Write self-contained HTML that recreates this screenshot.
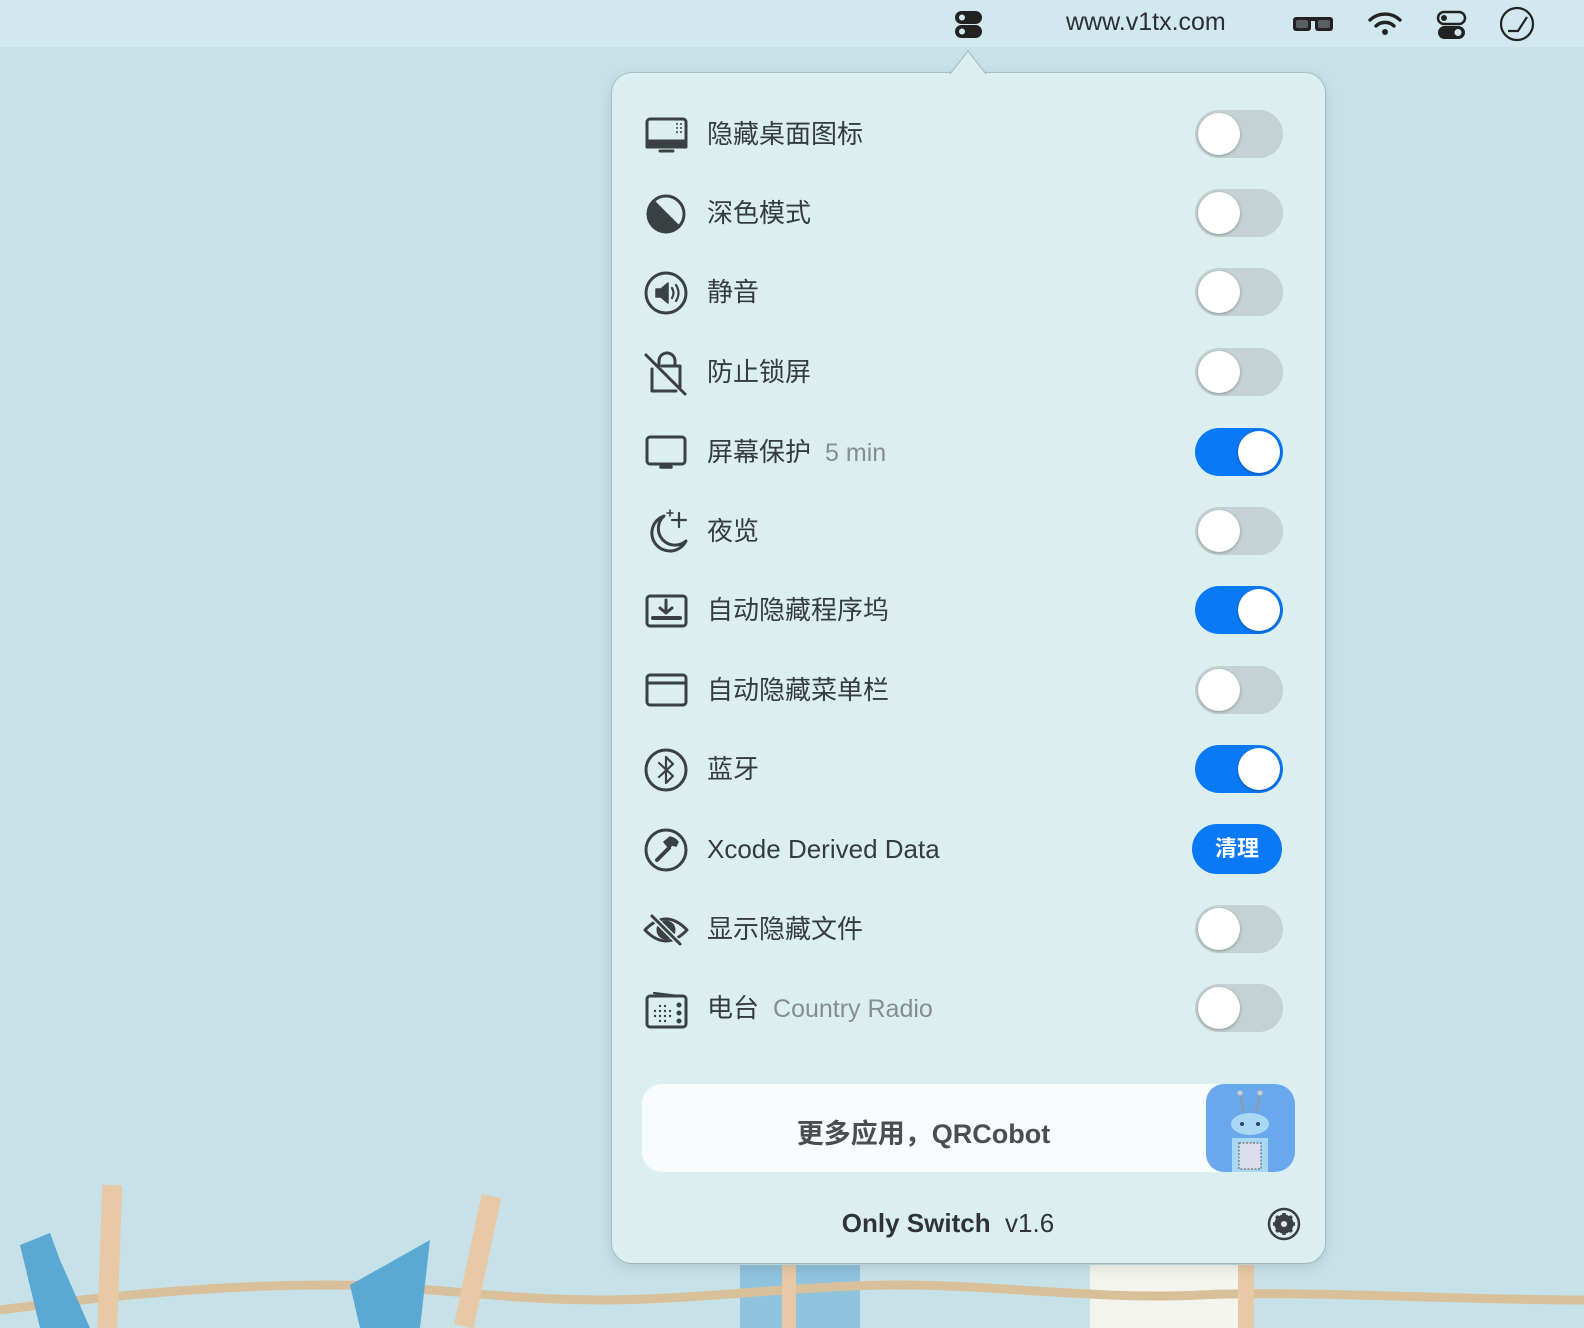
<!DOCTYPE html>
<html><head><meta charset="utf-8"><style>
*{margin:0;padding:0;box-sizing:border-box}
body{width:1584px;height:1328px;overflow:hidden;background:#c6e2e8;font-family:"Liberation Sans","Noto Sans CJK SC",sans-serif;position:relative;color:#3a3f42}
.bar{position:absolute;left:0;top:0;width:1584px;height:47px;background:#d1e9ee}
.url{position:absolute;left:1066px;top:8px;font-size:25px;color:#2b2f31}
.panel{position:absolute;left:612px;top:73px;width:713px;height:1190px;background:#dbeff1;border-radius:20px;box-shadow:0 0 0 1px rgba(120,140,145,.35),0 4px 14px rgba(0,0,0,.12)}
.row{position:absolute;left:707px;font-size:26px;line-height:30px;color:#363b3e}
.row .s{color:#868d90;margin-left:14px;font-size:25px}
.tg{position:absolute;left:1195px;width:88px;height:48px;border-radius:24px;background:#c4d2d3}
.tg::after{content:"";position:absolute;left:3px;top:3px;width:42px;height:42px;border-radius:50%;background:#fff;box-shadow:0 1px 3px rgba(0,0,0,.3)}
.tg.on{background:#0a79f6}
.tg.on::after{left:43px}
.btn{position:absolute;left:1192px;top:824px;width:90px;height:50px;border-radius:25px;background:#0a79f6;color:#fff;font-size:22px;font-weight:bold;text-align:center;line-height:50px}
.banner{position:absolute;left:642px;top:1084px;width:653px;height:88px;background:#f7fbfb;border-radius:20px;overflow:hidden}
.banner .t{position:absolute;left:0;width:563px;top:28px;text-align:center;font-size:27px;font-weight:bold;color:#4a4e50}
.foot{position:absolute;left:612px;width:672px;top:1208px;text-align:center;font-size:26px;color:#2f3335}
</style></head><body>
<div class="bar"></div>
<div class="url">www.v1tx.com</div>
<svg style="position:absolute;left:0;top:0" width="1584" height="1328">
<!-- rope and decor -->
<rect x="740" y="1265" width="120" height="63" fill="#8fc3de"/>
<rect x="1090" y="1265" width="150" height="63" fill="#f3f4ee"/>
<path d="M0 1310 C150 1290 250 1285 330 1285 C420 1285 500 1300 600 1300 C700 1300 800 1285 900 1285 C1000 1285 1100 1300 1200 1295 C1300 1290 1450 1300 1584 1300" stroke="#d8c19a" stroke-width="9" fill="none"/>
<path d="M20 1245 L50 1233 L60 1260 L90 1328 L40 1328 Z" fill="#5aa9d2"/>
<path d="M350 1285 L430 1240 L420 1328 L360 1328 Z" fill="#5aa9d2"/>
<rect x="100" y="1185" width="20" height="143" fill="#e8c9a6" transform="rotate(2 110 1250)"/>
<rect x="470" y="1195" width="20" height="133" fill="#e8c9a6" transform="rotate(12 480 1250)"/>
<rect x="782" y="1265" width="14" height="63" fill="#e8c9a6"/>
<rect x="1238" y="1265" width="16" height="63" fill="#e8c9a6"/>
<!-- menu bar icons -->
<g fill="#222"><rect x="955" y="11" width="27" height="13" rx="6.5"/><rect x="955" y="25" width="27" height="13" rx="6.5"/></g>
<circle cx="962" cy="17.5" r="3" fill="#d1e9ee"/><circle cx="962" cy="31.5" r="3" fill="#d1e9ee"/>
<g fill="#222"><rect x="1293" y="17" width="18" height="14" rx="3"/><rect x="1315" y="17" width="18" height="14" rx="3"/><rect x="1305" y="17" width="16" height="4"/></g>
<g fill="#5a5f61"><rect x="1296" y="20" width="12" height="8" rx="2"/><rect x="1318" y="20" width="12" height="8" rx="2"/></g>
<g fill="none" stroke="#222" stroke-width="3.4" stroke-linecap="round"><path d="M1370 20 A22 22 0 0 1 1400 20"/><path d="M1376 26 A13 13 0 0 1 1394 26"/></g>
<circle cx="1385" cy="32" r="3" fill="#222"/>
<rect x="1438" y="12" width="27" height="12" rx="6" fill="none" stroke="#222" stroke-width="2.5"/><circle cx="1444" cy="18" r="3" fill="#222"/>
<rect x="1438" y="26" width="27" height="13" rx="6.5" fill="#222"/><circle cx="1458" cy="32.5" r="3.5" fill="#d1e9ee"/>
<circle cx="1517" cy="24" r="16" fill="none" stroke="#222" stroke-width="2.2"/><path d="M1508 31 L1518 31 L1527 17" fill="none" stroke="#222" stroke-width="2.2"/>
</svg>
<div class="panel"></div>
<svg style="position:absolute;left:0;top:0" width="1584" height="1328" fill="none" stroke="#3b4043" stroke-width="3" stroke-linecap="round" stroke-linejoin="round">
<path d="M950 74 L968 51 L986 74 Z" fill="#dbeff1" stroke="none"/>
<path d="M950 74 L968 51 L986 74" stroke="#9fb3b6" stroke-width="1"/>
<!-- 1 monitor with dots -->
<rect x="647" y="119" width="39" height="28" rx="3"/><rect x="647" y="141" width="39" height="6" fill="#3b4043"/><path d="M660 151 H673" stroke-width="3"/>
<g fill="#3b4043" stroke="none"><circle cx="677" cy="124" r="1"/><circle cx="681" cy="124" r="1"/><circle cx="677" cy="128" r="1"/><circle cx="681" cy="128" r="1"/><circle cx="677" cy="132" r="1"/><circle cx="681" cy="132" r="1"/></g>
<!-- 2 half circle -->
<circle cx="666" cy="214" r="18"/><path d="M653.3 201.3 A18 18 0 0 0 678.7 226.7 Z" fill="#3b4043"/>
<!-- 3 speaker -->
<circle cx="666" cy="293" r="20"/><path d="M656 289 H661 L668 283 V303 L661 297 H656 Z" fill="#3b4043" stroke-width="1.5"/><path d="M672 288 Q675 293 672 298" stroke-width="2.2"/><path d="M676 285 Q681 293 676 301" stroke-width="2.2"/>
<!-- 4 lock slash -->
<path d="M659 366 V361 A8 8 0 0 1 675 361 V366"/><path d="M652 369 V391 H676 M680 387 V366 H662"/><path d="M646 355 L685 394"/>
<!-- 5 monitor -->
<rect x="647" y="437" width="38" height="27" rx="3"/><path d="M661 467 H671" stroke-width="3.5"/>
<!-- 6 moon -->
<path d="M664 516 A18 18 0 1 0 686 541 A14 14 0 0 1 664 516 Z"/><path d="M679 513 V527 M672 520 H686" stroke-width="2.2"/><path d="M670 510 V516 M667 513 H673" stroke-width="1.6"/>
<!-- 7 tray download -->
<rect x="647" y="596" width="39" height="30" rx="3"/><path d="M666 600 V613 M660 608 L666 613 L672 608"/><path d="M653 618 H680" stroke-width="4"/>
<!-- 8 window -->
<rect x="647" y="675" width="39" height="30" rx="3"/><path d="M647 683 H686"/>
<!-- 9 bluetooth -->
<circle cx="666" cy="770" r="20"/><path d="M659 763 L673 776 L666 783 V757 L673 764 L659 777" stroke-width="2.2"/>
<!-- 10 hammer -->
<circle cx="666" cy="850" r="20"/><path d="M657 860 L669 848" stroke-width="4"/><path d="M664 842 L670 837 Q675 838 678 842 L676 846 L672 845 L669 848 Z" fill="#3b4043" stroke-width="1.5"/>
<!-- 11 eye slash -->
<path d="M645 930 Q666 908 687 930 Q666 952 645 930 Z"/><circle cx="666" cy="930" r="8" fill="#3b4043"/><path d="M652 916 L680 944" stroke="#dbeff1" stroke-width="6"/><path d="M652 916 L680 944"/>
<!-- 12 radio -->
<rect x="647" y="996" width="39" height="31" rx="3"/><path d="M654 993 L678 996" stroke-width="2.2"/>
<g fill="#3b4043" stroke="none"><circle cx="679" cy="1005" r="2.5"/><circle cx="679" cy="1013" r="2.5"/><circle cx="679" cy="1021" r="2.5"/>
<circle cx="660" cy="1006" r="1.2"/><circle cx="665" cy="1006" r="1.2"/><circle cx="655" cy="1011" r="1.2"/><circle cx="660" cy="1011" r="1.2"/><circle cx="665" cy="1011" r="1.2"/><circle cx="670" cy="1011" r="1.2"/><circle cx="655" cy="1016" r="1.2"/><circle cx="660" cy="1016" r="1.2"/><circle cx="665" cy="1016" r="1.2"/><circle cx="670" cy="1016" r="1.2"/><circle cx="660" cy="1021" r="1.2"/><circle cx="665" cy="1021" r="1.2"/></g>
<!-- gear -->
<circle cx="1284" cy="1224" r="15" stroke-width="2.5"/><circle cx="1284" cy="1224" r="7" stroke-width="5"/>
<g stroke-width="3.5" stroke-linecap="butt"><path d="M1284 1213 V1235 M1273 1224 H1295 M1276.2 1216.2 L1291.8 1231.8 M1276.2 1231.8 L1291.8 1216.2"/></g>
<circle cx="1284" cy="1224" r="6.5" fill="#3b4043" stroke="none"/>
<circle cx="1284" cy="1224" r="3" fill="#dbeff1" stroke="none"/>
</svg>
<div class="row" style="top:119px">隐藏桌面图标</div>
<div class="row" style="top:198px">深色模式</div>
<div class="row" style="top:277px">静音</div>
<div class="row" style="top:357px">防止锁屏</div>
<div class="row" style="top:437px">屏幕保护<span class="s">5 min</span></div>
<div class="row" style="top:516px">夜览</div>
<div class="row" style="top:595px">自动隐藏程序坞</div>
<div class="row" style="top:675px">自动隐藏菜单栏</div>
<div class="row" style="top:754px">蓝牙</div>
<div class="row" style="top:834px">Xcode Derived Data</div>
<div class="row" style="top:914px">显示隐藏文件</div>
<div class="row" style="top:993px">电台<span class="s">Country Radio</span></div>
<div class="tg" style="top:110px"></div>
<div class="tg" style="top:189px"></div>
<div class="tg" style="top:268px"></div>
<div class="tg" style="top:348px"></div>
<div class="tg on" style="top:428px"></div>
<div class="tg" style="top:507px"></div>
<div class="tg on" style="top:586px"></div>
<div class="tg" style="top:666px"></div>
<div class="tg on" style="top:745px"></div>
<div class="btn">清理</div>
<div class="tg" style="top:905px"></div>
<div class="tg" style="top:984px"></div>
<div class="banner"><div class="t">更多应用，QRCobot</div>
<svg style="position:absolute;left:564px;top:0" width="89" height="88">
<rect x="0" y="0" width="89" height="88" rx="18" fill="#6aa8ee"/>
<path d="M38 28 L34 10 M50 28 L54 10" stroke="#8a9aa8" stroke-width="2"/>
<circle cx="34" cy="9" r="2.5" fill="#ccc"/><circle cx="54" cy="9" r="2.5" fill="#ccc"/>
<ellipse cx="44" cy="40" rx="19" ry="11" fill="#a9d8f5"/>
<circle cx="36" cy="40" r="2" fill="#345"/><circle cx="52" cy="40" r="2" fill="#345"/>
<rect x="26" y="54" width="36" height="34" fill="#a9d8f5"/>
<rect x="33" y="59" width="22" height="26" fill="#dde" stroke="#555" stroke-width="1" stroke-dasharray="2 1.5"/>
</svg></div>
<div class="foot"><b>Only Switch</b>&nbsp;&nbsp;v1.6</div>
</body></html>
